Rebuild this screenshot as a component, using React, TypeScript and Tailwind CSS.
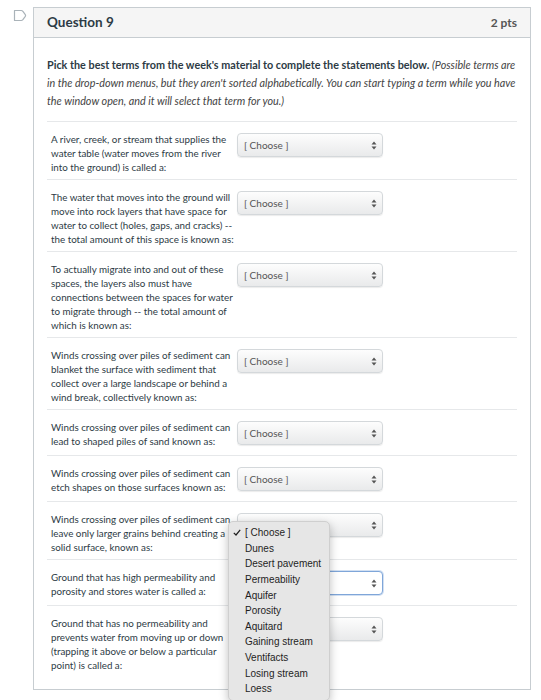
import React from 'react';

type Row = { text: string; focused?: boolean };

const rows: Row[] = [
  { text: 'A river, creek, or stream that supplies the water table (water moves from the river into the ground) is called a:' },
  { text: 'The water that moves into the ground will move into rock layers that have space for water to collect (holes, gaps, and cracks) -- the total amount of this space is known as:' },
  { text: 'To actually migrate into and out of these spaces, the layers also must have connections between the spaces for water to migrate through -- the total amount of which is known as:' },
  { text: 'Winds crossing over piles of sediment can blanket the surface with sediment that collect over a large landscape or behind a wind break, collectively known as:' },
  { text: 'Winds crossing over piles of sediment can lead to shaped piles of sand known as:' },
  { text: 'Winds crossing over piles of sediment can etch shapes on those surfaces known as:' },
  { text: 'Winds crossing over piles of sediment can leave only larger grains behind creating a solid surface, known as:' },
  { text: 'Ground that has high permeability and porosity and stores water is called a:', focused: true },
  { text: 'Ground that has no permeability and prevents water from moving up or down (trapping it above or below a particular point) is called a:' },
];

const options = [
  '[ Choose ]',
  'Dunes',
  'Desert pavement',
  'Permeability',
  'Aquifer',
  'Porosity',
  'Aquitard',
  'Gaining stream',
  'Ventifacts',
  'Losing stream',
  'Loess',
];

function Arrows() {
  return (
    <svg width="6" height="9" viewBox="0 0 6 9" className="shrink-0">
      <path d="M3 0.5 L5.5 3.5 H0.5 Z" fill="#555" />
      <path d="M3 8.5 L5.5 5.5 H0.5 Z" fill="#555" />
    </svg>
  );
}

function FakeSelect({ focused }: { focused?: boolean }) {
  return (
    <div
      className={
        focused
          ? 'flex h-[24px] w-[146px] items-center justify-between rounded-[4px] border border-[#7fa6d9] bg-white pl-[6px] pr-[5px] shadow-[0_0_0_1px_rgba(127,166,217,0.35)]'
          : 'flex h-[24px] w-[146px] items-center justify-between rounded-[4px] border border-[#d4d8db] bg-gradient-to-b from-[#fdfdfd] to-[#e9eaeb] pl-[6px] pr-[5px] shadow-[0_1px_1px_rgba(0,0,0,0.08)]'
      }
    >
      <span className="text-[10px] text-[#555]">{focused ? '' : '[ Choose ]'}</span>
      <Arrows />
    </div>
  );
}

export default function App() {
  return (
    <div className="relative min-h-[700px] bg-white font-['Lato','Liberation_Sans',sans-serif] text-[#2d3b45]">
      <div className="flex pl-[13px] pt-[7px]">
        <svg width="14" height="13" viewBox="0 0 14 13" className="mt-[2px] shrink-0">
          <path
            d="M1.5 1.5 H8.2 Q9.2 1.5 9.9 2.3 L12.3 5.6 Q12.9 6.5 12.3 7.4 L9.9 10.7 Q9.2 11.5 8.2 11.5 H1.5 Z"
            fill="none"
            stroke="#aab3b9"
            strokeWidth="1.2"
            strokeLinejoin="round"
          />
        </svg>

        <div className="ml-[6px] w-[498px] border border-[#c7cdd1]">
          {/* header */}
          <div className="flex h-[30px] items-center justify-between border-b border-[#c7cdd1] bg-[#f5f5f5] px-[13px]">
            <h2 className="text-[13.5px] font-bold text-[#2d3b45]">Question 9</h2>
            <span className="text-[12px] font-bold text-[#555]">2 pts</span>
          </div>

          <div className="px-[13px] pb-[12px] pt-[18px]">
            <p className="mb-[11px] text-[10.8px] leading-[18px]">
              <strong className="font-bold">
                Pick the best terms from the week's material to complete the statements below.
              </strong>{' '}
              <em className="text-[#444]">
                (Possible terms are in the drop-down menus, but they aren't sorted alphabetically. You can start typing a term while you have the window open, and it will select that term for you.)
              </em>
            </p>

            <div>
              {rows.map((r, i) => (
                <div key={i} className="flex items-start border-t border-[#e6e8ea] pl-[4px]">
                  <div className="w-[186px] pb-[5px] pt-[10px] text-[9.8px] leading-[14px]">{r.text}</div>
                  <div className="pb-[10px] pt-[11px]">
                    <FakeSelect focused={r.focused} />
                  </div>
                </div>
              ))}
            </div>
          </div>
        </div>
      </div>

      {/* open dropdown menu */}
      <div className="absolute left-[228px] top-[521px] w-[102px] rounded-[5px] border border-[#cfcfcf] bg-[#e6e6e6] py-[3px] font-['Liberation_Sans',Arial,sans-serif] text-[10px] text-[#1e1e1e] shadow-[0_3px_10px_rgba(0,0,0,0.25)]">
        {options.map((o, i) => (
          <div key={o} className="flex h-[15.6px] items-center">
            <span className="flex w-[16px] justify-center">
              {i === 0 && (
                <svg width="8" height="7" viewBox="0 0 8 7">
                  <path d="M0.8 3.8 L3 6 L7.2 0.8" fill="none" stroke="#1e1e1e" strokeWidth="1.2" />
                </svg>
              )}
            </span>
            <span>{o}</span>
          </div>
        ))}
      </div>
    </div>
  );
}
